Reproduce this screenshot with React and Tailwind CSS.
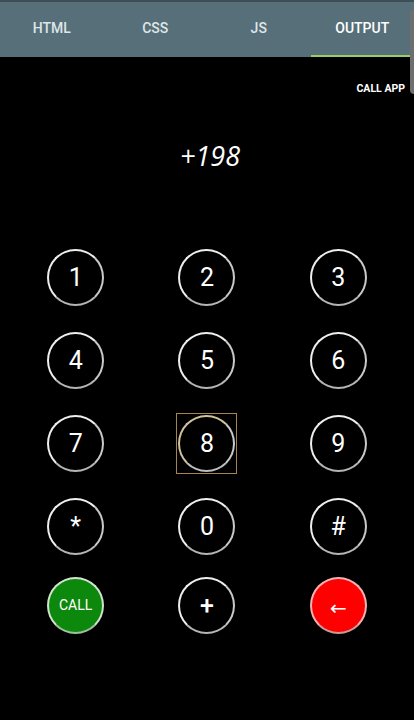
const keys = ["1", "2", "3", "4", "5", "6", "7", "8", "9", "*", "0", "#"];

const tabs = ["HTML", "CSS", "JS", "OUTPUT"];

function Key({ label, focused }) {
  return (
    <div className="flex justify-center">
      <div
        className={`p-px ${focused ? "outline outline-1 outline-[#a9834f]" : ""}`}
      >
        <button
          className={`w-[57px] h-[57px] rounded-full border-2 bg-black text-white text-[25px] flex items-center justify-center ${
            focused
              ? "border-[#cfc29a] border-b-[#bdbdbd] border-r-[#c8c8c8]"
              : "border-[#eeeeee] border-b-[#b5b5b5] border-r-[#c9c9c9]"
          }`}
          style={{ fontFamily: "Roboto, sans-serif" }}
        >
          {label}
        </button>
      </div>
    </div>
  );
}

export default function App() {
  return (
    <div className="w-[414px] h-[720px] bg-black overflow-hidden relative" style={{ fontFamily: "Roboto, sans-serif" }}>
      {/* Tabs */}
      <div className="h-[57px] bg-[#566f79] border-t-2 border-[#3d4f56] grid grid-cols-4">
        {tabs.map((t, i) => (
          <div
            key={t}
            className={`flex items-center justify-center text-[14px] font-medium ${
              i === 3 ? "text-white border-b-2 border-[#9ccc65]" : "text-[#dfe6e8] border-b-2 border-transparent"
            }`}
          >
            {t}
          </div>
        ))}
      </div>

      {/* scrollbar thumb */}
      <div className="absolute right-0 top-[10px] w-[4px] h-[84px] rounded-l bg-[#6e6e6e]" />

      <div className="flex justify-end pr-[9px] pt-[25px]">
        <span className="text-white text-[10.5px] font-bold leading-[14px]">CALL APP</span>
      </div>

      <div
        className="mt-[44px] text-center text-white italic text-[27px] leading-[32px] pl-[6px]"
        style={{ fontFamily: "'Open Sans', sans-serif" }}
      >
        +198
      </div>

      {/* Keypad */}
      <div className="mt-[76px] px-[10px] grid grid-cols-3 gap-y-[24px]">
        {keys.map((k) => (
          <Key key={k} label={k} focused={k === "8"} />
        ))}
      </div>

      <div className="mt-[21px] px-[10px] grid grid-cols-3">
        <div className="flex justify-center">
          <button className="w-[57px] h-[57px] rounded-full border-2 border-[#cfe3cf] border-b-[#9fbf9f] bg-[#0c880c] text-white text-[14px] flex items-center justify-center">
            CALL
          </button>
        </div>
        <div className="flex justify-center">
          <button className="w-[57px] h-[57px] rounded-full border-2 border-[#eeeeee] border-b-[#b5b5b5] border-r-[#c9c9c9] bg-black text-white text-[25px] font-medium flex items-center justify-center">
            +
          </button>
        </div>
        <div className="flex justify-center">
          <button
            className="w-[57px] h-[57px] rounded-full border-2 border-[#f3b3b3] border-b-[#c99] bg-[#ff0000] text-white text-[20px] pt-[4px] flex items-center justify-center"
            style={{ fontFamily: "'DejaVu Sans', sans-serif" }}
          >
            ←
          </button>
        </div>
      </div>
    </div>
  );
}
